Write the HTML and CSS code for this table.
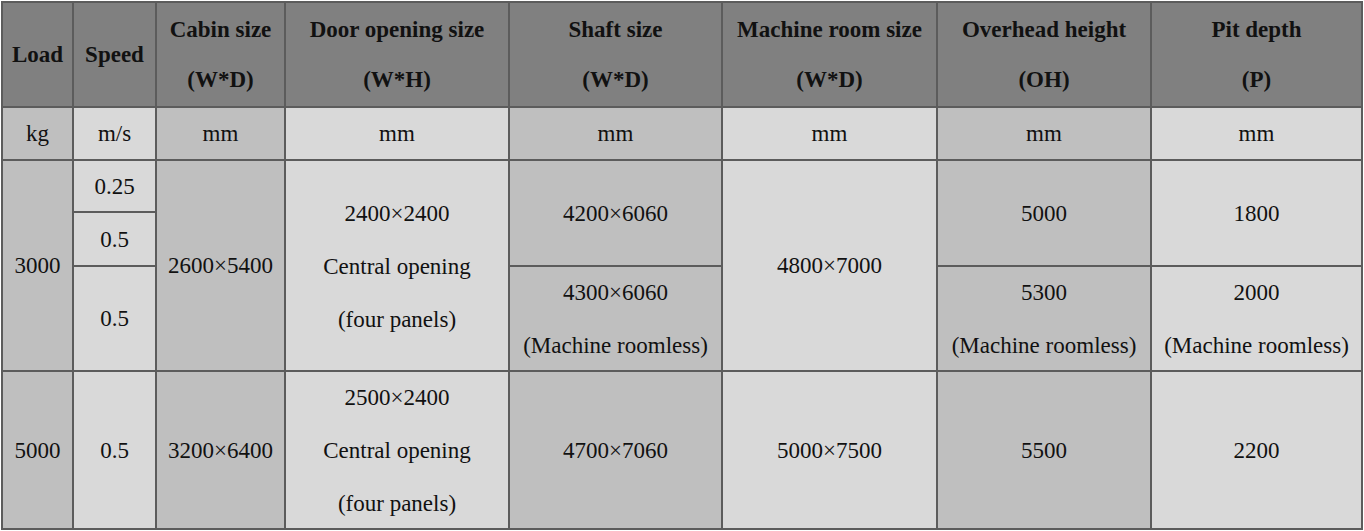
FILE: index.html
```html
<!DOCTYPE html>
<html>
<head>
<meta charset="utf-8">
<link rel="stylesheet" href="styles.css">
</head>
<body>
<div class="sheet">
<table class="spec">
  <colgroup>
    <col class="c-load"><col class="c-speed"><col class="c-cabin"><col class="c-door">
    <col class="c-shaft"><col class="c-machine"><col class="c-oh"><col class="c-pit">
  </colgroup>
  <thead>
    <tr class="r-head">
      <th>Load</th>
      <th>Speed</th>
      <th>Cabin size<br>(W*D)</th>
      <th>Door opening size<br>(W*H)</th>
      <th>Shaft size<br>(W*D)</th>
      <th>Machine room size<br>(W*D)</th>
      <th>Overhead height<br>(OH)</th>
      <th>Pit depth<br>(P)</th>
    </tr>
  </thead>
  <tbody>
    <tr class="r-unit">
      <td class="dk">kg</td>
      <td class="lt">m/s</td>
      <td class="dk">mm</td>
      <td class="lt">mm</td>
      <td class="dk">mm</td>
      <td class="lt">mm</td>
      <td class="dk">mm</td>
      <td class="lt">mm</td>
    </tr>
    <tr class="r-a">
      <td class="dk" rowspan="3">3000</td>
      <td class="lt">0.25</td>
      <td class="dk" rowspan="3">2600×5400</td>
      <td class="lt" rowspan="3"><div class="ml">2400×2400<br>Central opening<br>(four panels)</div></td>
      <td class="dk" rowspan="2">4200×6060</td>
      <td class="lt" rowspan="3">4800×7000</td>
      <td class="dk" rowspan="2">5000</td>
      <td class="lt" rowspan="2">1800</td>
    </tr>
    <tr class="r-b">
      <td class="lt">0.5</td>
    </tr>
    <tr class="r-c">
      <td class="lt">0.5</td>
      <td class="dk"><div class="ml">4300×6060<br>(Machine roomless)</div></td>
      <td class="dk"><div class="ml">5300<br>(Machine roomless)</div></td>
      <td class="lt"><div class="ml">2000<br>(Machine roomless)</div></td>
    </tr>
    <tr class="r-d">
      <td class="dk">5000</td>
      <td class="lt">0.5</td>
      <td class="dk">3200×6400</td>
      <td class="lt"><div class="ml">2500×2400<br>Central opening<br>(four panels)</div></td>
      <td class="dk">4700×7060</td>
      <td class="lt">5000×7500</td>
      <td class="dk">5500</td>
      <td class="lt">2200</td>
    </tr>
  </tbody>
</table>
</div>
</body>
</html>
```

FILE: styles.css
```css
html, body {
  margin: 0;
  padding: 0;
  background: #ffffff;
}

.sheet {
  padding: 1px 0 0 1px;
}

.spec {
  border-collapse: collapse;
  table-layout: fixed;
  width: 1360px;
  font-family: "Liberation Serif", "DejaVu Serif", serif;
  color: #111111;
}

.c-load { width: 71px; }
.c-speed { width: 83px; }
.c-cabin { width: 129px; }
.c-door { width: 224px; }
.c-shaft { width: 213px; }
.c-machine { width: 215px; }
.c-oh { width: 214px; }
.c-pit { width: 211px; }

.spec th,
.spec td {
  border: 2px solid #5c5c5c;
  padding: 0;
  text-align: center;
  vertical-align: middle;
}

.spec th {
  background: #808080;
  font-weight: bold;
  font-size: 23px;
  line-height: 50px;
}

.spec td {
  font-size: 23px;
  line-height: 49px;
}

.ml {
  line-height: 53px;
  margin: -2px 0 -2px;
  padding-top: 1px;
}

.dk { background: #bfbfbf; }
.lt { background: #d9d9d9; }

.r-head { height: 105px; }
.r-unit { height: 53px; }
.r-a { height: 52px; }
.r-b { height: 54px; }
.r-c { height: 104px; }
.r-d { height: 157px; }
```
